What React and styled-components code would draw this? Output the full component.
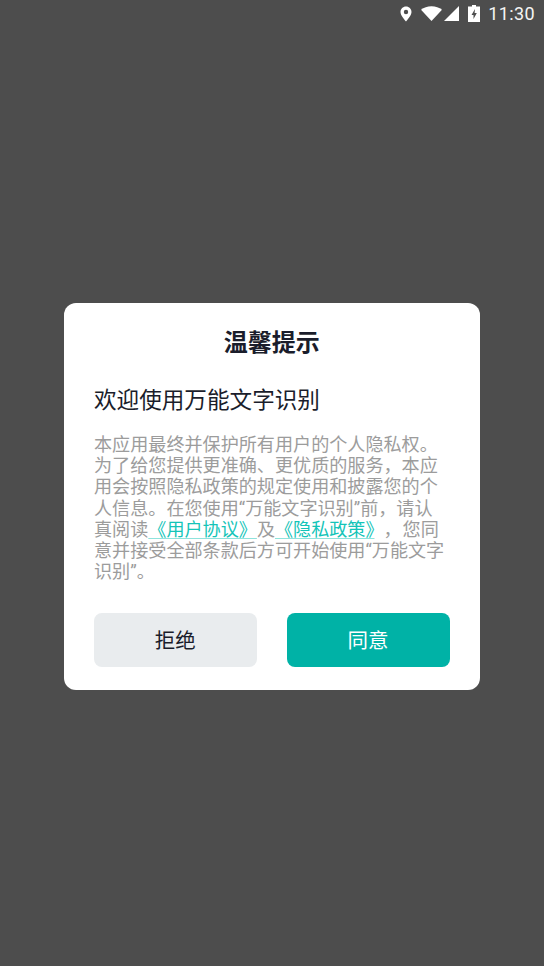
import React from "react";
import styled, { createGlobalStyle } from "styled-components";

const Global = createGlobalStyle`
  html, body { margin: 0; padding: 0; height: 100%; background: #4d4d4d; }
  #root { height: 100%; }
  * { box-sizing: border-box; }
`;
const Screen = styled.div`
  width: 544px; height: 966px; background: #4d4d4d; display: flex; flex-direction: column;
  font-family: Roboto, "Noto Sans CJK SC", "Noto Sans", sans-serif; overflow: hidden;
`;
const StatusBar = styled.div`
  height: 27px; flex: none; display: flex; align-items: center; justify-content: flex-end;
  padding: 0 9px 0 0; color: #fff;
`;
const StatusIcon = styled.svg`
  display: block; fill: #fff; flex: none; margin-right: ${p => p.$gap || 0}px;
`;
const Clock = styled.span`
  font-family: Roboto, sans-serif; font-size: 18px; line-height: 27px; letter-spacing: 0.4px; color: #f4f4f4;
`;
const Main = styled.main`
  flex: 1; display: flex; align-items: center; justify-content: center;
`;
const Card = styled.section`
  width: 416px; height: 387px; background: #fff; border-radius: 12px; padding: 23px 30.5px 23px 30px;
  display: flex; flex-direction: column;
`;
const Title = styled.h1`
  margin: 0; text-align: center; font-size: 24px; line-height: 34px; font-weight: 700; color: #1a1d2b;
`;
const Heading = styled.h2`
  margin: 25px 0 0; font-size: 22.6px; line-height: 32px; font-weight: 400; color: #1a1d2b;
`;
const Body = styled.p`
  margin: 17px 0 0; font-size: 18.1px; line-height: 21.2px; color: #9c9c9c; white-space: nowrap;
`;
const Link = styled.a`
  color: #14c4b8; text-decoration: underline; text-decoration-color: #8fe3dc;
  text-underline-offset: 2px; text-decoration-thickness: 1px;
`;
const Comma = styled.span`
  margin-left: 9px; margin-right: 1px;
`;
const Actions = styled.div`
  margin-top: auto; display: flex; justify-content: space-between;
`;
const Button = styled.button`
  width: ${p => p.$primary ? 163 : 162.5}px; height: 54px; border: 0; border-radius: 8px; padding: 0 0 2px;
  font: inherit; font-size: 20.5px;
  background: ${p => p.$primary ? "#00b2a6" : "#e9ecee"};
  color: ${p => p.$primary ? "#fff" : "#1a1d2b"};
`;

export default function App() {
  return (
    <Screen>
      <Global />
      <StatusBar>
        <StatusIcon $gap={9} width="12" height="16" viewBox="0 0 12 16">
          <path fillRule="evenodd" d="M6 0.500C2.900 0.500 0.500 2.900 0.500 6c0 3.600 4 7.400 5.500 9.500C7.500 13.400 11.500 9.600 11.500 6 11.500 2.900 9.100 0.500 6 0.500zM6 8.200a2.200 2.200 0 1 1 0-4.400 2.200 2.200 0 0 1 0 4.400z" />
        </StatusIcon>
        <StatusIcon $gap={1} width="21" height="15" viewBox="0 0 21 15">
          <path d="M0 3.800C2.800 1.500 6.400 0.200 10.500 0.200S18.200 1.500 21 3.800L10.500 15z" />
        </StatusIcon>
        <StatusIcon $gap={9} width="16" height="15" viewBox="0 0 16 15">
          <path d="M16 0V15H1z" />
        </StatusIcon>
        <StatusIcon $gap={8} width="12" height="17" viewBox="0 0 12 17">
          <path fillRule="evenodd" d="M4 0h4v1.500h4V17H0V1.500h4zM7 4L3.500 10h2v4L8.800 8H6.600z" />
        </StatusIcon>
        <Clock>11:30</Clock>
      </StatusBar>
      <Main>
        <Card>
          <Title>温馨提示</Title>
          <Heading>欢迎使用万能文字识别</Heading>
          <Body>
            本应用最终并保护所有用户的个人隐私权。<br />
            为了给您提供更准确、更优质的服务，本应<br />
            用会按照隐私政策的规定使用和披露您的个<br />
            人信息。在您使用“万能文字识别”前，请认<br />
            真阅读<Link>《用户协议》</Link>及<Link>《隐私政策》</Link><Comma>，</Comma>您同<br />
            意并接受全部条款后方可开始使用“万能文字<br />
            识别”。
          </Body>
          <Actions>
            <Button>拒绝</Button>
            <Button $primary>同意</Button>
          </Actions>
        </Card>
      </Main>
    </Screen>
  );
}
